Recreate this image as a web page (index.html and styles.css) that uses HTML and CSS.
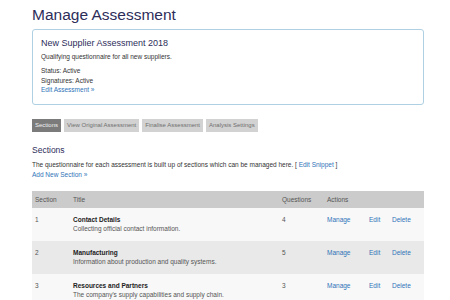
FILE: index.html
```html
<!DOCTYPE html>
<html lang="en">
<head>
    <meta charset="UTF-8">
    <title>Manage Assessment</title>
    <link rel="stylesheet" href="styles.css">
</head>
<body>
    <div class="page">
        <h1 class="page-title">Manage Assessment</h1>

        <div class="assessment-box">
            <h2 class="assessment-name">New Supplier Assessment 2018</h2>
            <p class="assessment-desc">Qualifying questionnaire for all new suppliers.</p>
            <div class="assessment-meta">
                <div>Status: Active</div>
                <div>Signatures: Active</div>
                <a href="#">Edit Assessment &raquo;</a>
            </div>
        </div>

        <!-- Tabs -->
        <div class="tabs">
            <a href="#" class="tab active">Sections</a>
            <a href="#" class="tab">View Original Assessment</a>
            <a href="#" class="tab">Finalise Assessment</a>
            <a href="#" class="tab">Analysis Settings</a>
        </div>

        <h3 class="section-heading">Sections</h3>
        <p class="section-intro">The questionnaire for each assessment is built up of sections which can be managed here. [ <a href="#">Edit Snippet</a> ]</p>
        <a href="#" class="add-link">Add New Section &raquo;</a>

        <table class="sections-table">
            <colgroup>
                <col style="width: 38px">
                <col style="width: 209px">
                <col style="width: 45px">
                <col style="width: 42px">
                <col style="width: 23px">
                <col style="width: 35px">
            </colgroup>
            <thead>
                <tr>
                    <th>Section</th>
                    <th>Title</th>
                    <th>Questions</th>
                    <th colspan="3">Actions</th>
                </tr>
            </thead>
            <tbody>
                <tr>
                    <td>1</td>
                    <td><strong>Contact Details</strong><br>Collecting official contact information.</td>
                    <td>4</td>
                    <td><a href="#">Manage</a></td>
                    <td><a href="#">Edit</a></td>
                    <td><a href="#">Delete</a></td>
                </tr>
                <tr>
                    <td>2</td>
                    <td><strong>Manufacturing</strong><br>Information about production and quality systems.</td>
                    <td>5</td>
                    <td><a href="#">Manage</a></td>
                    <td><a href="#">Edit</a></td>
                    <td><a href="#">Delete</a></td>
                </tr>
                <tr>
                    <td>3</td>
                    <td><strong>Resources and Partners</strong><br>The company's supply capabilities and supply chain.</td>
                    <td>3</td>
                    <td><a href="#">Manage</a></td>
                    <td><a href="#">Edit</a></td>
                    <td><a href="#">Delete</a></td>
                </tr>
            </tbody>
        </table>
    </div>
</body>
</html>
```

FILE: styles.css
```css
body {
    margin: 0;
    padding: 0;
    background-color: #ffffff;
    font-family: 'Liberation Sans', Arial, Helvetica, sans-serif;
    color: #333333;
    font-size: 6.5px;
    line-height: 9px;
    overflow: hidden;
}

a {
    color: #2f73b8;
    text-decoration: none;
}

.page {
    width: 392px;
    margin-left: 32px;
    padding-top: 5px;
}

.page-title {
    margin: 0 0 4px;
    font-size: 15.5px;
    line-height: 20px;
    font-weight: normal;
    color: #2d2d5a;
}

/* Assessment box */
.assessment-box {
    border: 1px solid #aed0e2;
    border-radius: 3px;
    padding: 8px 8px 9px;
}

.assessment-name {
    margin: 0;
    font-size: 9px;
    line-height: 11px;
    font-weight: normal;
    color: #2d2d5a;
}

.assessment-desc {
    margin: 3px 0 5px;
}

.assessment-meta {
    line-height: 9.5px;
}

/* Tabs */
.tabs {
    display: flex;
    gap: 3px;
    margin-top: 14px;
}

.tab {
    display: block;
    padding: 0 3px;
    font-size: 6px;
    line-height: 13px;
    background-color: #d2d2d2;
    color: #6f6f6f;
}

.tab.active {
    background-color: #7b7b7b;
    color: #f0f0f0;
}

.section-heading {
    margin: 13px 0 4px;
    font-size: 8.5px;
    line-height: 11px;
    font-weight: normal;
    color: #2d2d5a;
}

.section-intro {
    margin: 0;
    line-height: 10px;
}

.add-link {
    display: block;
    line-height: 10px;
}

/* Table */
.sections-table {
    width: 392px;
    margin-top: 11px;
    border-collapse: collapse;
    table-layout: fixed;
}

.sections-table th {
    background-color: #cbcbcb;
    color: #555555;
    font-weight: normal;
    text-align: left;
    padding: 4px 3px;
    height: 9px;
}

.sections-table td {
    padding: 7px 3px 8px;
    vertical-align: top;
    color: #555555;
    background-color: #f8f8f8;
}

.sections-table tbody tr:nth-child(even) td {
    background-color: #e9e9e9;
}

.sections-table td strong {
    color: #222222;
}
```
